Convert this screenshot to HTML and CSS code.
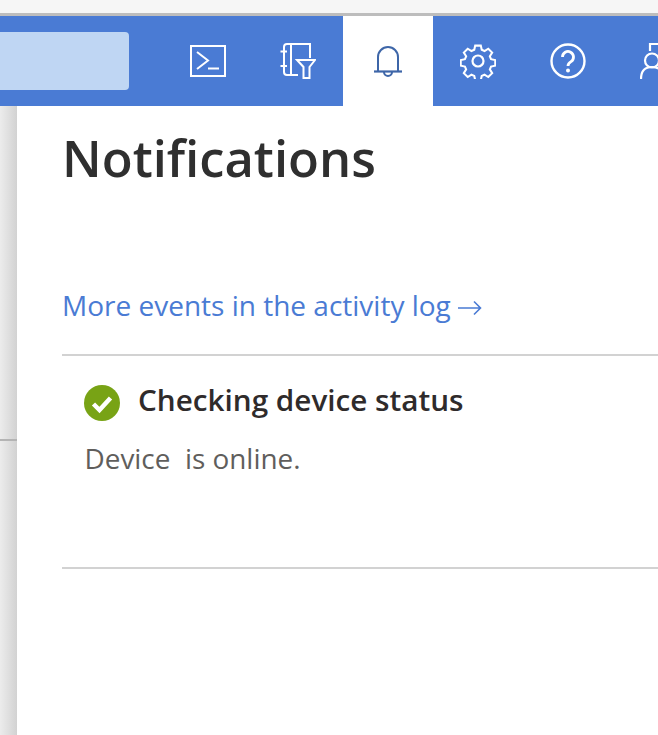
FILE: index.html
```html
<!DOCTYPE html>
<html lang="en">
<head>
<meta charset="utf-8">
<title>Notifications</title>
<link rel="stylesheet" href="styles.css">
</head>
<body>
<div class="chrome"></div>
<header class="topbar">
  <div class="search"></div>
  <nav class="tools">
    <div class="tool">
      <svg class="icon" viewBox="0 0 36 32" width="36" height="32"><g fill="none" stroke="#fff" stroke-width="2"><rect x="1" y="1" width="34" height="30"/><path d="M7 7l11 8.500-11 8.500M18 23.500h11"/></g></svg>
    </div>
    <div class="tool">
      <svg class="icon" viewBox="0 0 36 36" width="36" height="36"><g fill="none" stroke="#fff" stroke-width="2"><path d="M30 15V1H7a3 3 0 0 0-3 3v25a3 3 0 0 0 3 3h11M11 1v31M.5 8.500H7M.5 23H7"/><path d="M17 17h18l-5.500 7v11h-6V24z"/></g></svg>
    </div>
    <div class="tool active">
      <svg class="icon" viewBox="0 0 28 32" width="28" height="32"><g fill="none" stroke="#3e66a8" stroke-width="2"><path d="M4 26V12a10 10 0 0 1 20 0v14"/><path d="M0 26.500h28" stroke-width="2.200"/><path d="M10 27a4 4 0 0 0 8 0"/></g></svg>
    </div>
    <div class="tool">
      <svg class="icon" viewBox="0 0 36 36" width="36" height="36"><g fill="none" stroke="#fff" stroke-width="2.200"><path d="M15 1.500h6l1 4.500 3 1.300 4-2.500 4.200 4.200-2.500 4 1.300 3 4.500 1v6l-4.500 1-1.300 3 2.500 4-4.200 4.200-4-2.500-3 1.300-1 4.500h-6l-1-4.500-3-1.300-4 2.500-4.200-4.200 2.500-4-1.300-3-4.500-1v-6l4.500-1 1.300-3-2.500-4 4.200-4.200 4 2.500 3-1.300z" transform="translate(1.200 1.200) scale(.933)"/><circle cx="18" cy="18" r="5.500"/></g></svg>
    </div>
    <div class="tool">
      <svg class="icon" viewBox="0 0 36 36" width="36" height="36"><circle cx="18" cy="18" r="16.500" fill="none" stroke="#fff" stroke-width="2.400"/><path d="M12.500 14a5.500 5.500 0 1 1 8.500 4.600c-2 1.300-3 2.300-3 4.400" fill="none" stroke="#fff" stroke-width="2.800"/><circle cx="18" cy="27.500" r="2" fill="#fff"/></svg>
    </div>
    <div class="tool">
      <svg class="icon" viewBox="0 0 36 36" width="36" height="36"><g fill="none" stroke="#fff" stroke-width="2.200"><path d="M10 8V1h22"/><circle cx="12" cy="17.500" r="7"/><path d="M1 36c0-8 4-12 11-12s11 4 11 12"/></g></svg>
    </div>
  </nav>
</header>
<div class="stage">
  <div class="backdrop"><div class="backdrop-rule"></div></div>
  <main class="panel">
    <h1 class="title">Notifications</h1>
    <a class="more" href="#">More events in the activity log<svg class="arrow" viewBox="0 0 24 16" width="24" height="16"><path d="M0 8h22.500M16 1.500L22.500 8 16 14.500" fill="none" stroke="#4a7bd4" stroke-width="1.600"/></svg></a>
    <section class="item">
      <div class="item-head">
        <svg class="check" viewBox="0 0 36 36" width="36" height="36"><circle cx="18" cy="18" r="18" fill="#78a315"/><path d="M9.500 19l6 6 11-12" fill="none" stroke="#fff" stroke-width="4.500"/></svg>
        <h2 class="item-title">Checking device status</h2>
      </div>
      <p class="item-body">Device&nbsp; is online.</p>
    </section>
  </main>
</div>
</body>
</html>
```
FILE: styles.css
```css
* { box-sizing: border-box; }
html, body { margin: 0; height: 100%; overflow: hidden; background: #fff; }
body { font-family: "Open Sans", "Noto Sans", sans-serif; display: flex; flex-direction: column; width: 658px; height: 735px; }
.chrome { flex: none; height: 16px; background: #f6f6f6; border-bottom: 3px solid #bdbdbd; }
.topbar { flex: none; height: 90px; background: #4a7bd4; display: flex; align-items: center; }
.search { flex: none; width: 129px; height: 58px; background: #bfd6f3; border-radius: 0 4px 4px 0; }
.tools { flex: none; display: flex; margin-left: 34px; }
.tool { flex: none; width: 90px; height: 90px; display: flex; align-items: center; justify-content: center; }
.tool.active { background: #fff; }
.icon { display: block; }
.stage { flex: 1; display: flex; min-height: 0; }
.backdrop { flex: none; width: 17px; background: linear-gradient(to right, #ececec, #d2d2d2); padding-top: 333px; }
.backdrop-rule { height: 2px; background: #b4b4b4; }
.panel { flex: 1; padding: 0 0 0 45px; min-width: 0; }
.title { margin: 17px 0 0; font-size: 50.700px; line-height: 70px; font-weight: 600; color: #2f2f2f; white-space: nowrap; }
.more { display: flex; align-items: center; margin-top: 92px; font-size: 28px; line-height: 40px; color: #4a7bd4; text-decoration: none; white-space: nowrap; }
.arrow { flex: none; margin: 6px 0 0 7px; }
.item { margin-top: 29px; height: 215px; border-top: 2px solid #d2d2d2; border-bottom: 2px solid #d2d2d2; padding: 26px 0 0 22px; }
.item-head { display: flex; align-items: center; gap: 18px; }
.check { flex: none; margin-top: 3px; }
.item-title { margin: 0 0 3px; font-size: 29.700px; line-height: 36px; font-weight: 600; color: #2f2b2b; white-space: nowrap; }
.item-body { margin: 19px 0 0 .5px; font-size: 27.900px; line-height: 36px; color: #605e5c; white-space: nowrap; }
```
